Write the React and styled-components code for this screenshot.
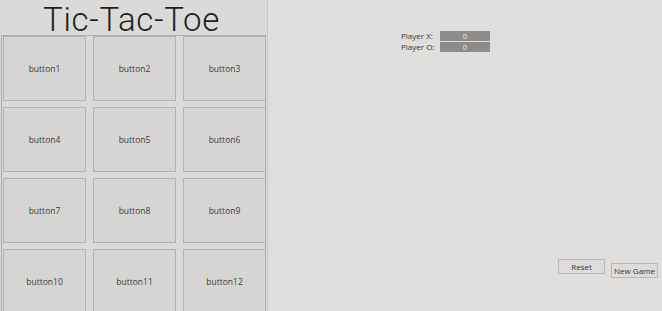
import React from "react";
import styled, { createGlobalStyle } from "styled-components";

const GlobalStyle = createGlobalStyle`
    html, body {
        margin: 0;
        padding: 0;
        background: #dedddb;
    }
    body {
        font-family: "Open Sans", "Noto Sans", sans-serif;
    }
`

const Window = styled.div`
    width: 662px;
    height: 311px;
    display: flex;
    overflow: hidden;
    background: #e0dfdd;
`

const LeftSide = styled.div`
    width: 268px;
    display: flex;
    flex-direction: column;
    background: #dbdad8;
    border-right: 1px solid #c9c8c6;
    box-sizing: border-box;
`

const Title = styled.h1`
    margin: 0;
    padding-left: 43px;
    height: 35px;
    font-family: Roboto, "Open Sans", sans-serif;
    font-size: 33px;
    line-height: 39px;
    font-weight: 300;
    color: #1e1e1e;
    letter-spacing: 0.7px;
    white-space: nowrap;
`

const Board = styled.div`
    margin-left: 1px;
    width: 265px;
    flex: 1;
    border: 1px solid #aeadab;
    border-bottom: none;
    box-sizing: border-box;
    display: grid;
    grid-template-columns: repeat(3, 83px);
    grid-auto-rows: 65px;
    column-gap: 7px;
    row-gap: 6px;
    padding: 0 0 0 1px;
`

const Cell = styled.button`
    margin: 0;
    padding: 0;
    background: #d6d5d3;
    border: 1px solid #b3b2b0;
    font-family: "Open Sans", sans-serif;
    font-size: 8.5px;
    color: #3a3a3a;
    cursor: pointer;
`

const RightSide = styled.div`
    flex: 1;
    display: flex;
    flex-direction: column;
    justify-content: space-between;
    padding: 31px 4px 33px 133px;
`

const Scores = styled.div`
    display: grid;
    grid-template-columns: 39px 50px;
    grid-auto-rows: 10px;
    row-gap: 1px;
`

const Label = styled.span`
    font-size: 8px;
    line-height: 10px;
    color: #333;
`

const ScoreBox = styled.span`
    background: #8d8c8b;
    color: #e8e8e8;
    font-size: 7.5px;
    line-height: 10px;
    text-align: center;
`

const Controls = styled.div`
    display: flex;
    justify-content: flex-end;
    align-items: flex-start;
    gap: 6px;
`

const ControlButton = styled.button`
    width: 47px;
    height: 15px;
    margin-top: ${props => props.$drop || 0}px;
    padding: 0;
    background: #dddcda;
    border: 1px solid #b9b8b6;
    font-family: "Open Sans", sans-serif;
    font-size: 8px;
    color: #333;
    cursor: pointer;
`

function App() {
    const cells = Array.from({ length: 12 }, (_, i) => `button${i + 1}`)

    return (
        <>
            <GlobalStyle />
            <Window>
                <LeftSide>
                    <Title>Tic-Tac-Toe</Title>
                    <Board>
                        {cells.map(name => <Cell key={name}>{name}</Cell>)}
                    </Board>
                </LeftSide>
                <RightSide>
                    <Scores>
                        <Label>Player X:</Label>
                        <ScoreBox>0</ScoreBox>
                        <Label>Player O:</Label>
                        <ScoreBox>0</ScoreBox>
                    </Scores>
                    <Controls>
                        <ControlButton>Reset</ControlButton>
                        <ControlButton $drop={4}>New Game</ControlButton>
                    </Controls>
                </RightSide>
            </Window>
        </>
    )
}

export default App;
